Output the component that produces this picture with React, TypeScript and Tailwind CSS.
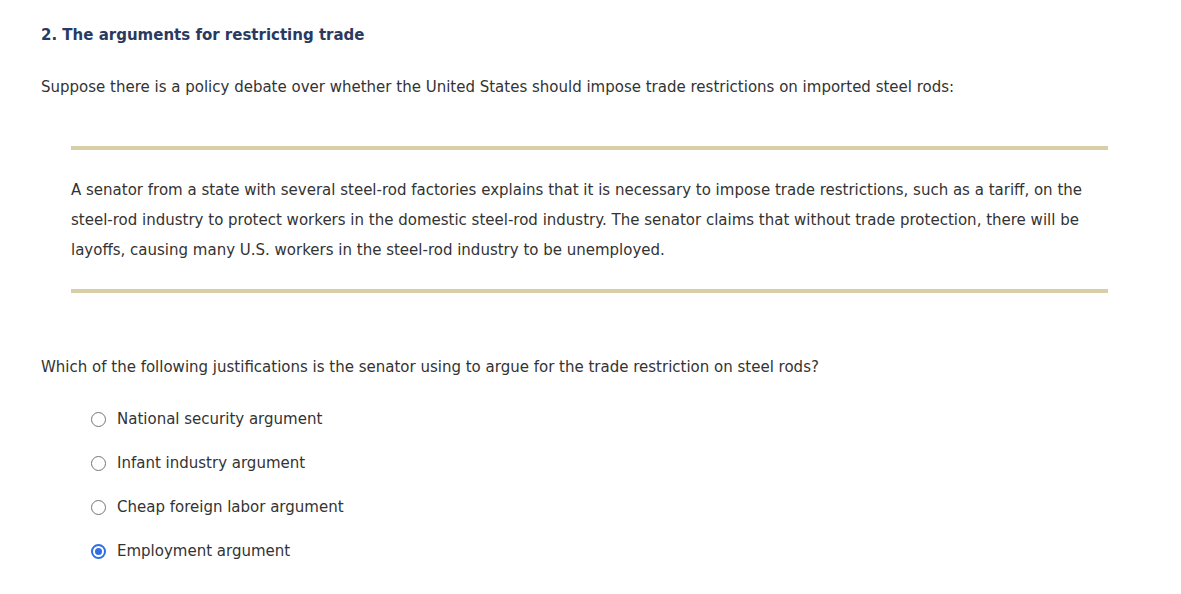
const options = [
  "National security argument",
  "Infant industry argument",
  "Cheap foreign labor argument",
  "Employment argument",
];

function Radio({ checked }: { checked: boolean }) {
  if (checked) {
    return (
      <span className="inline-flex h-[15px] w-[15px] shrink-0 items-center justify-center rounded-full border-2 border-[#2f6fe4] bg-white">
        <span className="h-[7px] w-[7px] rounded-full bg-[#2f6fe4]" />
      </span>
    );
  }
  return <span className="inline-block h-[15px] w-[15px] shrink-0 rounded-full border border-[#767676] bg-white" />;
}

export default function App() {
  return (
    <div className="min-h-[594px] bg-white px-[41px] pt-[25px] font-['DejaVu_Sans',sans-serif] text-[15px] text-[#333333]">
      <h2 className="text-[15px] font-bold leading-[20px] text-[#2a3a5f]">2. The arguments for restricting trade</h2>
      <p className="mt-[32px] leading-[20px]">
        Suppose there is a policy debate over whether the United States should impose trade restrictions on imported
        steel rods:
      </p>

      <div className="mx-[30px] mt-[49px] w-[1037px]">
        <div className="h-[4px] bg-[#d8cfa6]" />
        <p className="pb-[24px] pt-[25px] leading-[30px]">
          A senator from a state with several steel-rod factories explains that it is necessary to impose trade
          restrictions, such as a tariff, on the steel-rod industry to protect workers in the domestic steel-rod
          industry. The senator claims that without trade protection, there will be layoffs, causing many U.S.
          workers in the steel-rod industry to be unemployed.
        </p>
        <div className="h-[4px] bg-[#d8cfa6]" />
      </div>

      <p className="mt-[64px] leading-[20px]">
        Which of the following justifications is the senator using to argue for the trade restriction on steel rods?
      </p>

      <div className="mt-[32px] flex flex-col gap-[24px] pl-[50px]">
        {options.map((option, index) => (
          <label key={option} className="flex items-center gap-[11px] leading-[20px]">
            <Radio checked={index === 3} />
            <span>{option}</span>
          </label>
        ))}
      </div>
    </div>
  );
}
